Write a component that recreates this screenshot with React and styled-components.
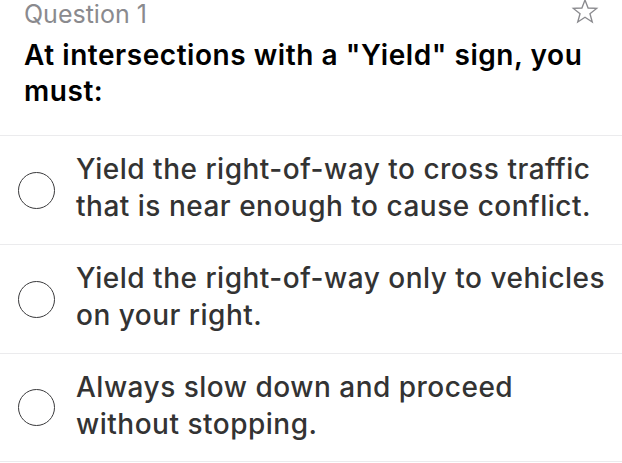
import React from "react";
import styled, { createGlobalStyle } from "styled-components";

const GlobalStyle = createGlobalStyle`
  html, body {
    margin: 0;
    padding: 0;
    background: #ffffff;
  }
  body {
    font-family: Inter, "Noto Sans", "Liberation Sans", sans-serif;
    -webkit-font-smoothing: antialiased;
  }
`;

const Screen = styled.div`
  width: 622px;
  height: 463px;
  overflow: hidden;
  background: #ffffff;
`;

const Header = styled.header`
  padding: 0 23px 0 24px;
`;

const TitleRow = styled.div`
  display: flex;
  align-items: flex-start;
  justify-content: space-between;
  height: 30px;
`;

const Label = styled.span`
  font-size: 25px;
  line-height: 28px;
  font-weight: 400;
  color: #8a8a8e;
`;

const StarButton = styled.button`
  display: flex;
  align-items: center;
  justify-content: center;
  width: 28px;
  height: 27px;
  margin-top: -2px;
  padding: 0;
  border: none;
  background: none;
  color: #8a8a8e;
`;

const QuestionText = styled.h1`
  margin: 7px 0 0;
  padding-bottom: 26px;
  font-size: 28px;
  line-height: 36px;
  font-weight: 600;
  color: #000000;
  letter-spacing: 0.55px;
`;

const Options = styled.ul`
  list-style: none;
  margin: 0;
  padding: 0;
`;

const OptionRow = styled.li`
  display: flex;
  align-items: center;
  gap: 21px;
  height: 109px;
  padding: 0 8px 0 18px;
  border-top: 1px solid #ebebed;
  box-sizing: border-box;

  &:last-child {
    border-bottom: 1px solid #ebebed;
  }
`;

const Radio = styled.span`
  flex: none;
  width: 37px;
  height: 37px;
  border-radius: 50%;
  border: 1.5px solid #3a3a3c;
  box-sizing: border-box;
`;

const OptionText = styled.span`
  margin-top: -4px;
  font-size: 28px;
  line-height: 37px;
  font-weight: 500;
  color: #333333;
  letter-spacing: 0.5px;
`;

const StarIcon = () => (
  <svg width="28" height="27" viewBox="0 0 24 24" fill="none" stroke="currentColor" strokeWidth="1.2" strokeLinejoin="miter">
    <path d="M12 1.8l2.75 7.1 7.6.35-5.95 4.75 2.05 7.35L12 17.15 5.55 21.35l2.05-7.35L1.65 9.25l7.6-.35z" />
  </svg>
);

const answers = [
  "Yield the right-of-way to cross traffic that is near enough to cause conflict.",
  "Yield the right-of-way only to vehicles on your right.",
  "Always slow down and proceed without stopping.",
];

export default function App() {
  return (
    <>
      <GlobalStyle />
      <Screen>
        <Header>
          <TitleRow>
            <Label>Question 1</Label>
            <StarButton aria-label="Bookmark">
              <StarIcon />
            </StarButton>
          </TitleRow>
          <QuestionText>At intersections with a "Yield" sign, you must:</QuestionText>
        </Header>
        <Options>
          {answers.map((text) => (
            <OptionRow key={text}>
              <Radio />
              <OptionText>{text}</OptionText>
            </OptionRow>
          ))}
        </Options>
      </Screen>
    </>
  );
}
